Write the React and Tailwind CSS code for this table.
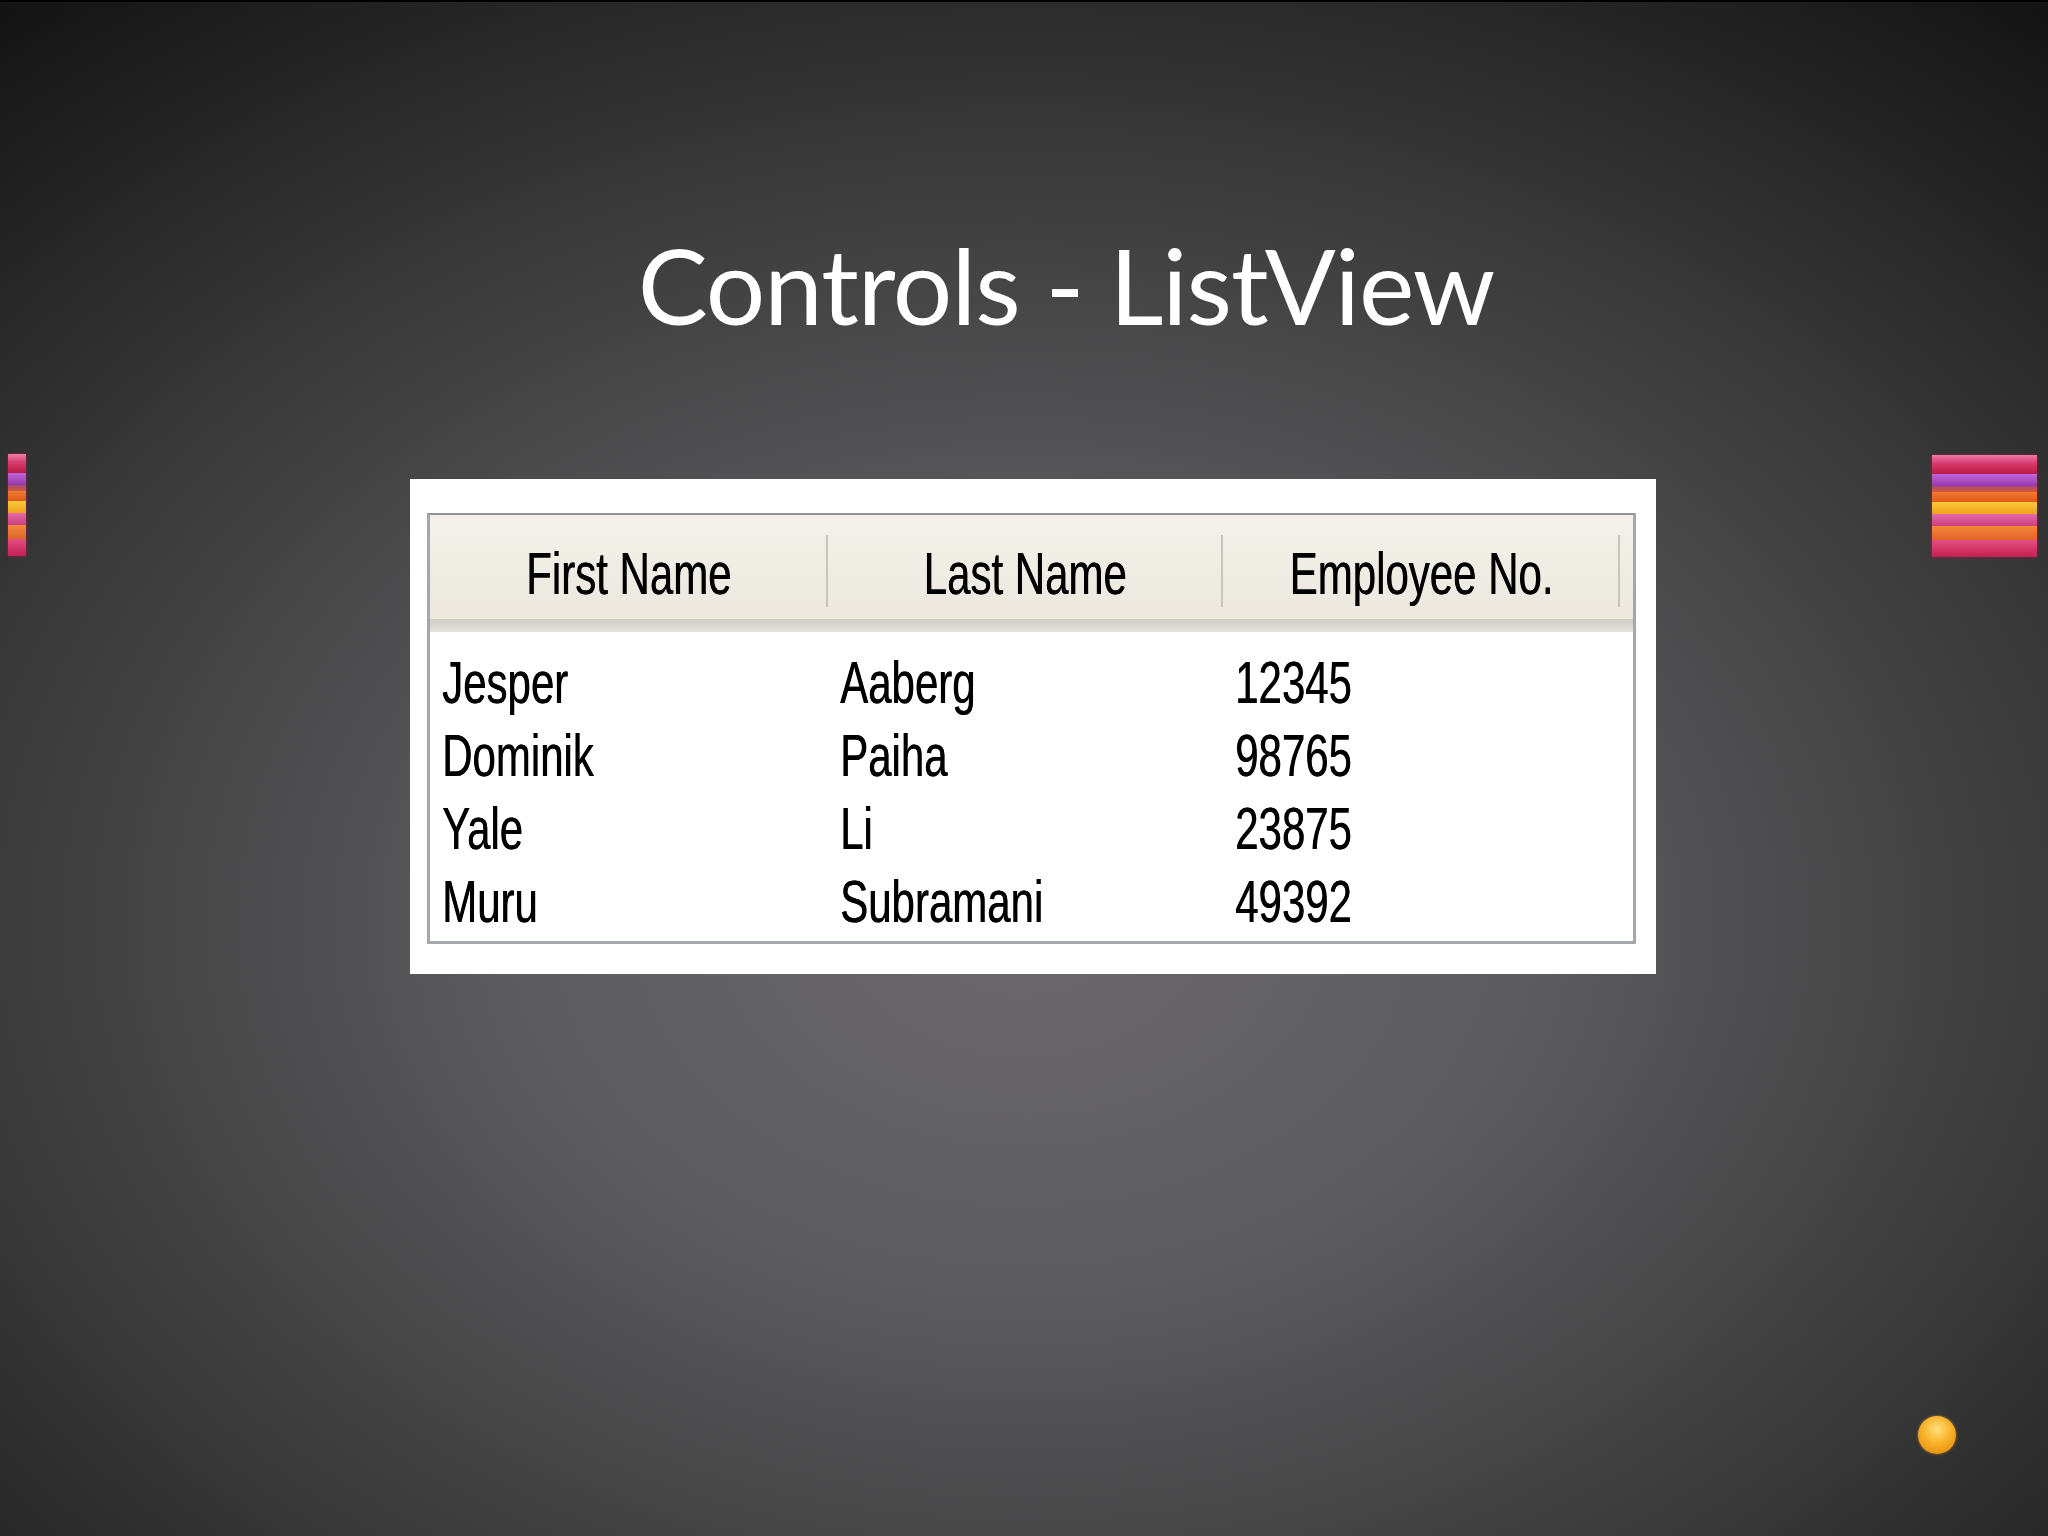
const rows = [
  { first: "Jesper", last: "Aaberg", no: "12345" },
  { first: "Dominik", last: "Paiha", no: "98765" },
  { first: "Yale", last: "Li", no: "23875" },
  { first: "Muru", last: "Subramani", no: "49392" },
];

const cols = ["First Name", "Last Name", "Employee No."];

// glossy striped tab used at both sides of the slide
const Stripes = ({ className }) => (
  <div
    className={`absolute flex flex-col rounded-[2px] shadow-[0_0_3px_rgba(200,30,80,0.6)] ${className}`}
  >
    <div className="h-[9%] bg-[linear-gradient(to_bottom,#f07aa6,#d2386e)]" />
    <div className="h-[10%] bg-[linear-gradient(to_bottom,#d83a68,#b81a48)]" />
    <div className="h-[11%] bg-[linear-gradient(to_bottom,#c066d8,#9638ac)]" />
    <div className="h-[6%] bg-[linear-gradient(to_bottom,#a8487a,#d05a3a)]" />
    <div className="h-[10%] bg-[linear-gradient(to_bottom,#f07a30,#e05a18)]" />
    <div className="h-[12%] bg-[linear-gradient(to_bottom,#fbc83c,#eea21e)]" />
    <div className="h-[12%] bg-[linear-gradient(to_bottom,#e66aa6,#c8407e)]" />
    <div className="h-[13%] bg-[linear-gradient(to_bottom,#f2883a,#e0622a)]" />
    <div className="h-[17%] bg-[linear-gradient(to_bottom,#e25080,#c41e52)]" />
  </div>
);

export default function App() {
  return (
    <div className="relative w-[2048px] h-[1536px] overflow-hidden border-t-2 border-black bg-[radial-gradient(ellipse_80%_78%_at_50%_60%,#6a686b_0%,#5d5c5e_30%,#3a393a_65%,#121212_100%)] font-['Liberation_Sans',Arial,sans-serif]">
      <Stripes className="left-[8px] top-[452px] w-[18px] h-[102px]" />
      <Stripes className="left-[1932px] top-[453px] w-[105px] h-[102px]" />
      <div className="absolute left-[1918px] top-[1414px] w-[38px] h-[38px] rounded-full bg-[radial-gradient(circle_at_50%_35%,#ffe07a_0%,#f8b22a_45%,#e89410_80%,#c87a08_100%)] shadow-[0_0_3px_rgba(255,170,30,0.6)]" />

      <div className="flex flex-col items-center">
        <h1 className="pt-[212px] pl-[84px] text-[105px] leading-[140px] text-white font-normal tracking-[-1px] font-['Lato','Open_Sans',sans-serif]">
          Controls - ListView
        </h1>

        <div className="mt-[125px] ml-[18px] w-[1246px] h-[495px] bg-white pt-[34px] pl-[17px] pr-[20px] pb-[30px] [text-shadow:0.6px_0_0_#000]">
          <div className="h-full border-[3px] border-t-[2px] border-[#a4a8ac] border-t-[#8f9498] flex flex-col">
            <div className="h-[104px] bg-[linear-gradient(to_bottom,#f3f1ea,#ece8de)] flex items-center">
              {cols.map((c, i) => (
                <div
                  key={c}
                  className={`h-full flex items-center justify-center ${
                    i === 2 ? "w-[397px]" : i === 1 ? "w-[395px]" : "w-[398px]"
                  }`}
                >
                  <div className="relative w-full h-full flex items-center justify-center">
                    <span className="inline-block scale-x-[0.7] text-[60px] leading-none text-black pt-[14px]">
                      {c}
                    </span>
                    <div className="absolute right-0 top-[20px] h-[72px] w-[2px] bg-[#c9c5b8]" />
                  </div>
                </div>
              ))}
            </div>
            <div className="h-[13px] bg-[linear-gradient(to_bottom,#cfccc4,#e4e2dc)]" />
            <div className="pt-[14px] flex flex-col">
              {rows.map((r) => (
                <div key={r.no} className="flex h-[73px] items-center text-[60px] leading-[73px] text-black">
                  <div className="w-[398px] pl-[12px]">
                    <span className="inline-block origin-left scale-x-[0.7]">{r.first}</span>
                  </div>
                  <div className="w-[395px] pl-[12px]">
                    <span className="inline-block origin-left scale-x-[0.7]">{r.last}</span>
                  </div>
                  <div className="w-[397px] pl-[12px]">
                    <span className="inline-block origin-left scale-x-[0.7]">{r.no}</span>
                  </div>
                </div>
              ))}
            </div>
          </div>
        </div>
      </div>
    </div>
  );
}
